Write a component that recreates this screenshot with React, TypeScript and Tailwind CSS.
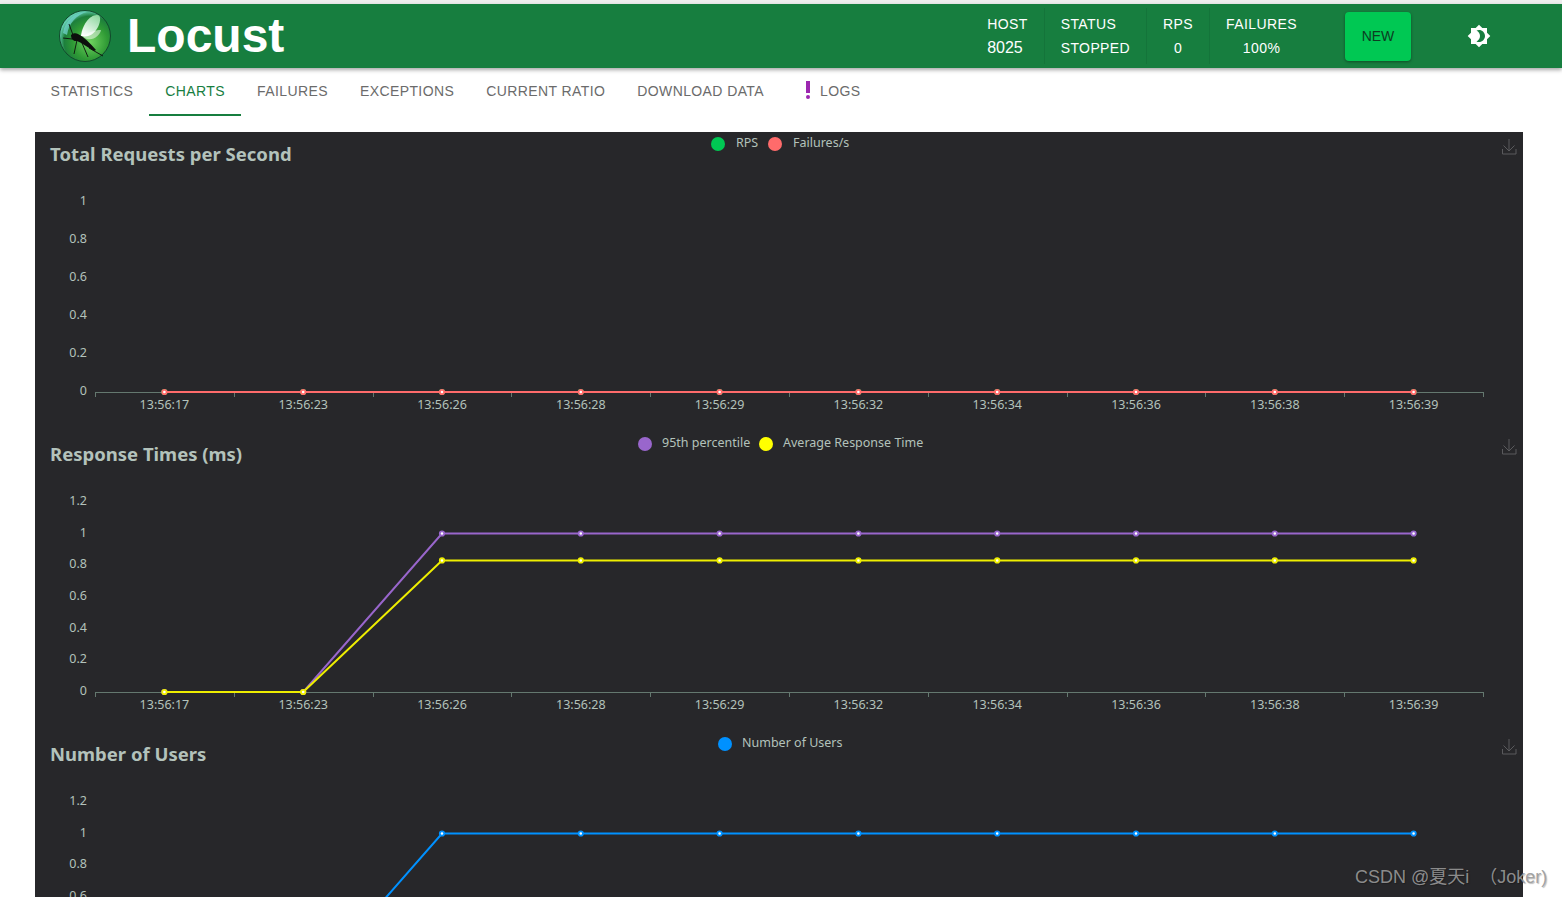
import React from 'react';

const TABS = ['Statistics', 'Charts', 'Failures', 'Exceptions', 'Current ratio', 'Download Data'];
const TIMES = ['13:56:17', '13:56:23', '13:56:26', '13:56:28', '13:56:29', '13:56:32', '13:56:34', '13:56:36', '13:56:38', '13:56:39'];

const AXIS_LEFT = 60;
const STEP = 138.8;
const AXIS_Y = 260;

interface Series {
  color: string;
  values: number[];
}

interface LegendItem {
  label: string;
  color: string;
  dotX: number;
  textX: number;
}

interface ChartProps {
  title: string;
  legend: LegendItem[];
  series: Series[];
  ticks: { label: string; y: number }[];
  // px per unit of value
  scale: number;
}

const DownloadIcon: React.FC = () => (
  <g fill="none" stroke="#5a5a5d" strokeWidth="1" transform="translate(1467 7)">
    <path d="M7 0v12M1.500 6.500l5.500 5.500 5.500-5.500M0.500 10v5h13.500v-5" />
  </g>
);

const Chart: React.FC<ChartProps> = ({ title, legend, series, ticks, scale }) => {
  const x = (i: number) => AXIS_LEFT + STEP / 2 + i * STEP;
  const y = (v: number) => AXIS_Y - v * scale;

  return (
    <svg width="1488" height="300" className="block font-['Noto_Sans','Open_Sans',sans-serif]">
      <text x="15" y="29" className="fill-[#b3c2bb] text-[18.500px] font-bold">
        {title}
      </text>
      {legend.map((l) => (
        <g key={l.label}>
          <circle cx={l.dotX} cy="12" r="7" fill={l.color} />
          <text x={l.textX} y="15" className="fill-[#b3c2bb] text-[12.500px]">
            {l.label}
          </text>
        </g>
      ))}
      <DownloadIcon />

      {ticks.map((t) => (
        <text key={t.label} x="52" y={t.y} textAnchor="end" className="fill-[#b3c2bb] text-[12.500px]">
          {t.label}
        </text>
      ))}

      <path d={`M${AXIS_LEFT} ${AXIS_Y}.5H${AXIS_LEFT + STEP * 10}`} stroke="#64786f" fill="none" />
      {Array.from({ length: 11 }, (_, i) => (
        <path key={i} d={`M${Math.round(AXIS_LEFT + i * STEP) + 0.5} ${AXIS_Y}v5`} stroke="#64786f" fill="none" />
      ))}
      {TIMES.map((t, i) => (
        <text key={t} x={x(i)} y="277" textAnchor="middle" className="fill-[#b3c2bb] text-[12.500px]">
          {t}
        </text>
      ))}

      {series.map((s) => (
        <g key={s.color}>
          <polyline
            points={s.values.map((v, i) => `${x(i)},${y(v)}`).join(' ')}
            fill="none"
            stroke={s.color}
            strokeWidth="2"
          />
          {s.values.map((v, i) => (
            <circle key={i} cx={x(i)} cy={y(v)} r="2.200" fill="#fff" stroke={s.color} strokeWidth="1.800" />
          ))}
        </g>
      ))}
    </svg>
  );
};

const Logo: React.FC = () => (
  <svg width="54" height="54" viewBox="0 0 54 54" className="shrink-0">
    <defs>
      <radialGradient id="ball" cx="0.6" cy="0.62" r="0.62">
        <stop offset="0" stopColor="#6fd35f" />
        <stop offset="0.55" stopColor="#2f9a35" />
        <stop offset="0.82" stopColor="#1d7f3c" />
        <stop offset="1" stopColor="#63cdb0" />
      </radialGradient>
      <linearGradient id="wing" x1="0.8" y1="0" x2="0.2" y2="1">
        <stop offset="0" stopColor="#8fd8a0" />
        <stop offset="1" stopColor="#ffffff" />
      </linearGradient>
    </defs>
    <circle cx="27" cy="27" r="25.500" fill="url(#ball)" stroke="#12492c" strokeWidth="1" />
    <path d="M5 24C7 11 17 3 29 3 18 6 11 14 9 26z" fill="#72d3cc" opacity="0.75" />
    <path d="M23 27C24 17 31 6 39 6c4 0 4 6 1 12-4 7-9 11-17 9z" fill="url(#wing)" />
    <path d="M25 28C30 23 37 21 43 21c-1 6-10 13-18 7z" fill="#fff" opacity="0.5" />
    <path
      d="M13 26c2-2 5-2 7-1 6 3 12 9 18 16l-2 1c-7-4-12-8-17-10-2 0-3 0-4-1-1 0-2-3-2-5z"
      fill="#0c0f0c"
    />
    <path
      d="M15 26L11 15M14 30L5 29M19 31l-3 14M24 34l6 14M31 39l14 8"
      stroke="#0c0f0c"
      strokeWidth="0.900"
      fill="none"
    />
  </svg>
);

const Stat: React.FC<{ label: string; value: string; big?: boolean; center?: boolean; last?: boolean }> = ({ label, value, big, center, last }) => (
  <div
    className={`flex h-[56px] flex-col justify-center gap-[4px] px-[16px] text-[14px] leading-[20px] tracking-[0.4px] ${
      center ? 'items-center' : 'items-start'
    } ${last ? '' : 'border-r border-[#14743a]'}`}
  >
    <span>{label}</span>
    <span className={big ? 'text-[16px] tracking-normal' : ''}>{value}</span>
  </div>
);

const App: React.FC = () => {
  return (
    <div className="relative h-[897px] overflow-hidden bg-white font-['Liberation_Sans',sans-serif]">
      <div className="h-[4px] bg-[#eeeeee]" />
      <header className="relative z-10 flex h-[64px] items-center bg-[#177e3f] pl-[58px] pr-[71px] text-white shadow-[0_2px_4px_rgba(0,0,0,0.35)]">
        <Logo />
        <span className="ml-[15px] text-[48px] font-bold leading-none">Locust</span>
        <div className="ml-auto flex items-center">
          <Stat label="HOST" value="8025" big />
          <Stat label="STATUS" value="STOPPED" />
          <Stat label="RPS" value="0" center />
          <Stat label="FAILURES" value="100%" center last />
          <button className="ml-[32px] h-[49px] w-[66px] rounded-[4px] bg-[#00c853] text-[14px] text-[#0c3d22] shadow-[0_1px_3px_rgba(0,0,0,0.4)]">
            NEW
          </button>
          <svg width="24" height="24" viewBox="0 0 24 24" fill="#fff" className="ml-[56px]">
            <path d="M20 8.690V4h-4.690L12 .690 8.690 4H4v4.690L.690 12 4 15.310V20h4.690L12 23.310 15.310 20H20v-4.690L23.310 12 20 8.690zM12 18c-.890 0-1.740-.200-2.500-.550C11.560 16.500 13 14.420 13 12s-1.440-4.500-3.500-5.450C10.260 6.200 11.110 6 12 6c3.310 0 6 2.690 6 6s-2.690 6-6 6z" />
          </svg>
        </div>
      </header>

      <nav className="flex h-[48px] pl-[34.500px] text-[14px] uppercase tracking-[0.4px]">
        {TABS.map((t) => (
          <div
            key={t}
            className={
              t === 'Charts'
                ? 'border-b-2 border-[#177e3f] px-[16px] pt-[13px] text-[#177e3f]'
                : 'px-[16px] pt-[13px] text-[#6b6b6b]'
            }
          >
            {t}
          </div>
        ))}
        <div className="flex items-start px-[16px] pt-[10px] text-[#6b6b6b]">
          <svg width="24" height="24" viewBox="0 0 24 24" fill="#9c27b0">
            <circle cx="12" cy="19" r="2" />
            <path d="M10 3h4v12h-4z" />
          </svg>
          <span className="pt-[3px]">Logs</span>
        </div>
      </nav>

      <main className="ml-[35px] mt-[16px] w-[1488px] bg-[#27272a]">
        <Chart
          title="Total Requests per Second"
          legend={[
            { label: 'RPS', color: '#00c853', dotX: 683, textX: 701 },
            { label: 'Failures/s', color: '#ff6b6b', dotX: 740, textX: 758 },
          ]}
          series={[
            { color: '#00c853', values: Array(10).fill(0) },
            { color: '#ff6b6b', values: Array(10).fill(0) },
          ]}
          ticks={[
            { label: '1', y: 73 },
            { label: '0.8', y: 111 },
            { label: '0.6', y: 149 },
            { label: '0.4', y: 187 },
            { label: '0.2', y: 225 },
            { label: '0', y: 263 },
          ]}
          scale={190}
        />
        <Chart
          title="Response Times (ms)"
          legend={[
            { label: '95th percentile', color: '#9966cc', dotX: 610, textX: 627 },
            { label: 'Average Response Time', color: '#ffff00', dotX: 731, textX: 748 },
          ]}
          series={[
            { color: '#9966cc', values: [0, 0, 1, 1, 1, 1, 1, 1, 1, 1] },
            { color: '#eeee00', values: [0, 0, 0.83, 0.83, 0.83, 0.83, 0.83, 0.83, 0.83, 0.83] },
          ]}
          ticks={[
            { label: '1.2', y: 73 },
            { label: '1', y: 105 },
            { label: '0.8', y: 136 },
            { label: '0.6', y: 168 },
            { label: '0.4', y: 200 },
            { label: '0.2', y: 231 },
            { label: '0', y: 263 },
          ]}
          scale={158.5}
        />
        <Chart
          title="Number of Users"
          legend={[{ label: 'Number of Users', color: '#0091ff', dotX: 690, textX: 707 }]}
          series={[{ color: '#0091ff', values: [0, 0, 1, 1, 1, 1, 1, 1, 1, 1] }]}
          ticks={[
            { label: '1.2', y: 73 },
            { label: '1', y: 105 },
            { label: '0.8', y: 136 },
            { label: '0.6', y: 168 },
            { label: '0.4', y: 200 },
            { label: '0.2', y: 231 },
            { label: '0', y: 263 },
          ]}
          scale={158.5}
        />
      </main>

      <span className="absolute left-[1355px] top-[864px] font-['Liberation_Sans','Noto_Sans_CJK_SC',sans-serif] text-[18px] leading-[26px] text-[#9a9a9a]/90 [text-shadow:1px_1px_1px_rgba(0,0,0,0.25)]">
        CSDN @夏天i{'\u00a0\u00a0'}（Joker)
      </span>
    </div>
  );
};

export default App;
